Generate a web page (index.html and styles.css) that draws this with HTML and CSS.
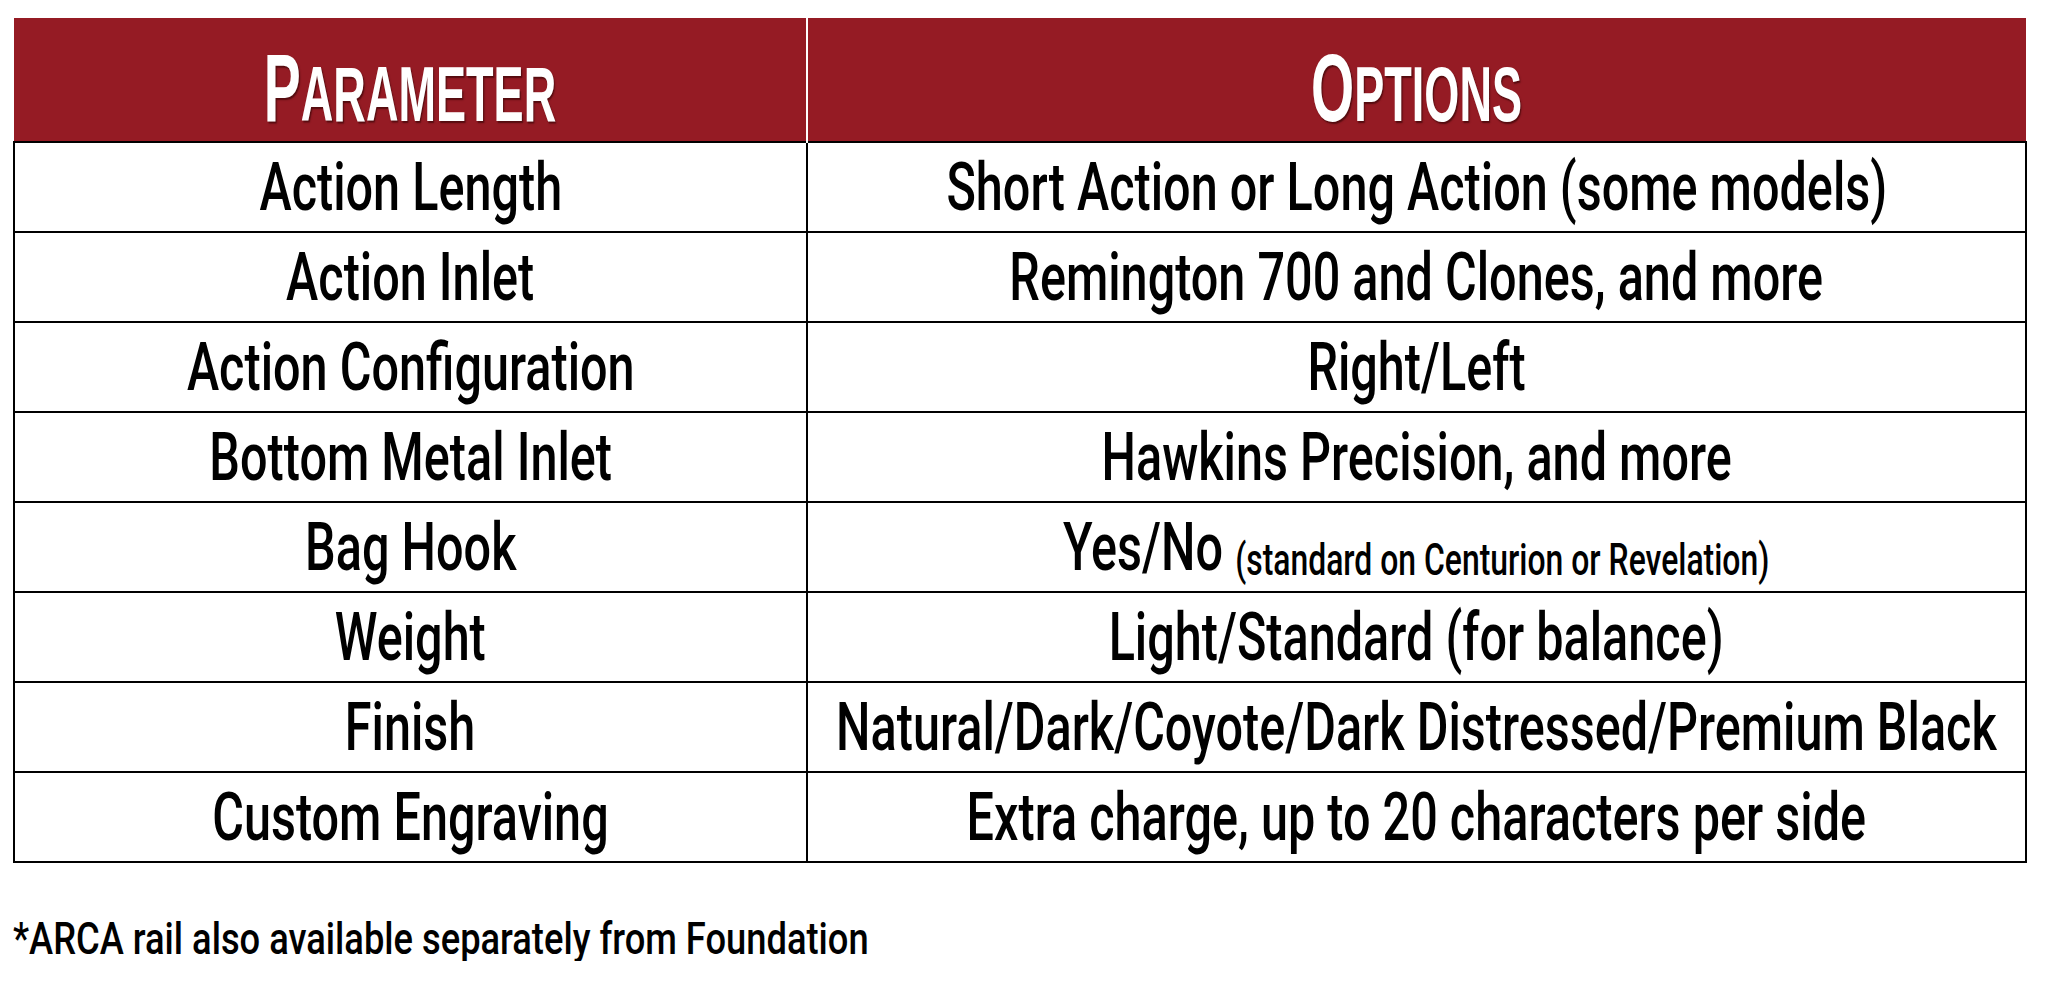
FILE: index.html
```html
<!DOCTYPE html>
<html lang="en">
<head>
<meta charset="utf-8">
<title>Stock Options</title>
<link rel="stylesheet" href="styles.css">
</head>
<body>
<main class="page">
  <table class="spec">
    <colgroup>
      <col class="col-param">
      <col class="col-opt">
    </colgroup>
    <thead>
      <tr class="head-row">
        <th class="head-cell head-left"><div class="cell"><span class="head-text"><span class="cap">P</span>arameter</span></div></th>
        <th class="head-cell"><div class="cell"><span class="head-text"><span class="cap">O</span>ptions</span></div></th>
      </tr>
    </thead>
    <tbody>
      <tr><td><div class="cell"><span class="cond">Action Length</span></div></td><td><div class="cell"><span class="cond">Short Action or Long Action (some models)</span></div></td></tr>
      <tr><td><div class="cell"><span class="cond">Action Inlet</span></div></td><td><div class="cell"><span class="cond">Remington 700 and Clones, and more</span></div></td></tr>
      <tr><td><div class="cell"><span class="cond">Action Configuration</span></div></td><td><div class="cell"><span class="cond">Right/Left</span></div></td></tr>
      <tr><td><div class="cell"><span class="cond">Bottom Metal Inlet</span></div></td><td><div class="cell"><span class="cond">Hawkins Precision, and more</span></div></td></tr>
      <tr><td><div class="cell"><span class="cond">Bag Hook</span></div></td><td><div class="cell"><span class="cond">Yes/No <span class="note">(standard on Centurion or Revelation)</span></span></div></td></tr>
      <tr><td><div class="cell"><span class="cond">Weight</span></div></td><td><div class="cell"><span class="cond">Light/Standard (for balance)</span></div></td></tr>
      <tr><td><div class="cell"><span class="cond">Finish</span></div></td><td><div class="cell"><span class="cond">Natural/Dark/Coyote/Dark Distressed/Premium Black</span></div></td></tr>
      <tr><td><div class="cell"><span class="cond">Custom Engraving</span></div></td><td><div class="cell"><span class="cond">Extra charge, up to 20 characters per side</span></div></td></tr>
    </tbody>
  </table>
  <div class="foot">
    <span class="foot-text">*ARCA rail also available separately from Foundation</span>
  </div>
</main>
</body>
</html>
```

FILE: styles.css
```css
html, body {
  margin: 0;
  padding: 0;
  background: #ffffff;
  overflow: hidden;
}

body {
  font-family: Roboto, "Liberation Sans", sans-serif;
  color: #000000;
}

.page {
  padding: 18px 0 0 13px;
}

.spec {
  border-collapse: collapse;
  width: 2012px;
  table-layout: fixed;
}

.col-param {
  width: 793px;
}

.col-opt {
  width: 1219px;
}

.cell {
  display: flex;
  justify-content: center;
  align-items: center;
  white-space: nowrap;
}

.cond {
  display: inline-block;
  transform: scaleX(0.725);
  transform-origin: center center;
}

.head-row {
  height: 124px;
}

.head-cell {
  background: #951b24;
  color: #ffffff;
  font-family: "Liberation Sans", Roboto, sans-serif;
  font-weight: 700;
  font-size: 78px;
  line-height: 1;
  text-transform: uppercase;
  vertical-align: middle;
  padding: 16px 0 0 0;
  border: none;
}

.head-text {
  display: inline-block;
  transform: scaleX(0.578);
  transform-origin: center center;
  text-shadow: 2px 2px 2px rgba(40, 0, 0, 0.6);
}

.cap {
  font-size: 96px;
}

.head-left {
  border-right: 2px solid #ffffff;
}

.spec tbody tr {
  height: 90px;
}

.spec td {
  border: 2px solid #000000;
  vertical-align: middle;
  font-size: 67px;
  font-weight: 500;
  line-height: 1;
  padding: 0;
}

.note {
  font-size: 44px;
  position: relative;
  top: 5px;
}

.foot {
  display: flex;
  margin: 54px 0 0 0;
  font-size: 44px;
  font-weight: 500;
  line-height: 1;
}

.foot-text {
  display: inline-block;
  transform: scaleX(0.825);
  transform-origin: left center;
}
```
